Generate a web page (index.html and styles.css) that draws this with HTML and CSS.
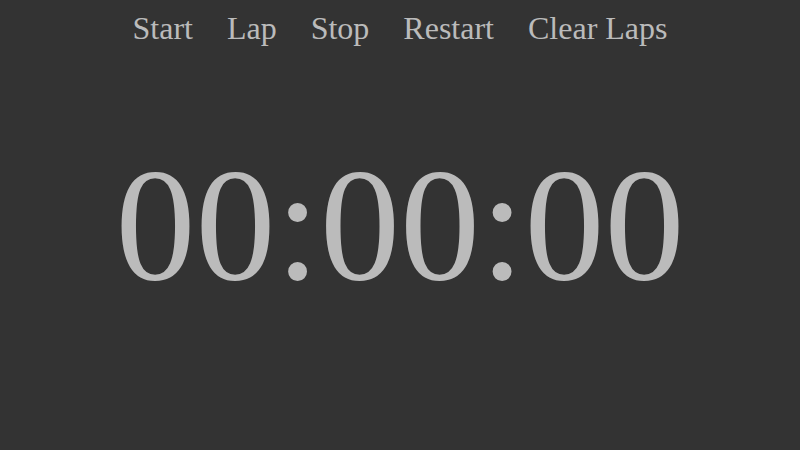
FILE: index.html
```html
<!DOCTYPE html>
<html lang="en">

<head>
    <meta charset="UTF-8">
    <meta name="viewport" content="width=device-width, initial-scale=1.0">
    <title>Stopwatch</title>
    <link rel="stylesheet" href="styles.css">
</head>

<body>
    <main class="stopwatch">
        <nav class="controls">
            <button class="control">Start</button>
            <button class="control">Lap</button>
            <button class="control">Stop</button>
            <button class="control">Restart</button>
            <button class="control">Clear Laps</button>
        </nav>
        <div class="display">00:00:00</div>
        <ul class="laps"></ul>
    </main>
</body>

</html>
```

FILE: styles.css
```css
body {
    background: #333333;
    color: #bbbbbb;
    font-family: "Liberation Serif", "Times New Roman", serif;
    margin: 0;
}

.stopwatch {
    display: flex;
    flex-direction: column;
    align-items: center;
}

.controls {
    display: flex;
    justify-content: center;
    padding-top: 10px;
}

.control {
    background: none;
    border: none;
    color: inherit;
    font-family: inherit;
    font-size: 32px;
    line-height: normal;
    padding: 0 17px;
    cursor: pointer;
}

.display {
    font-size: 160px;
    line-height: normal;
    margin-top: 86px;
}

.laps {
    list-style: none;
    margin: 0;
    padding: 0;
}
```
